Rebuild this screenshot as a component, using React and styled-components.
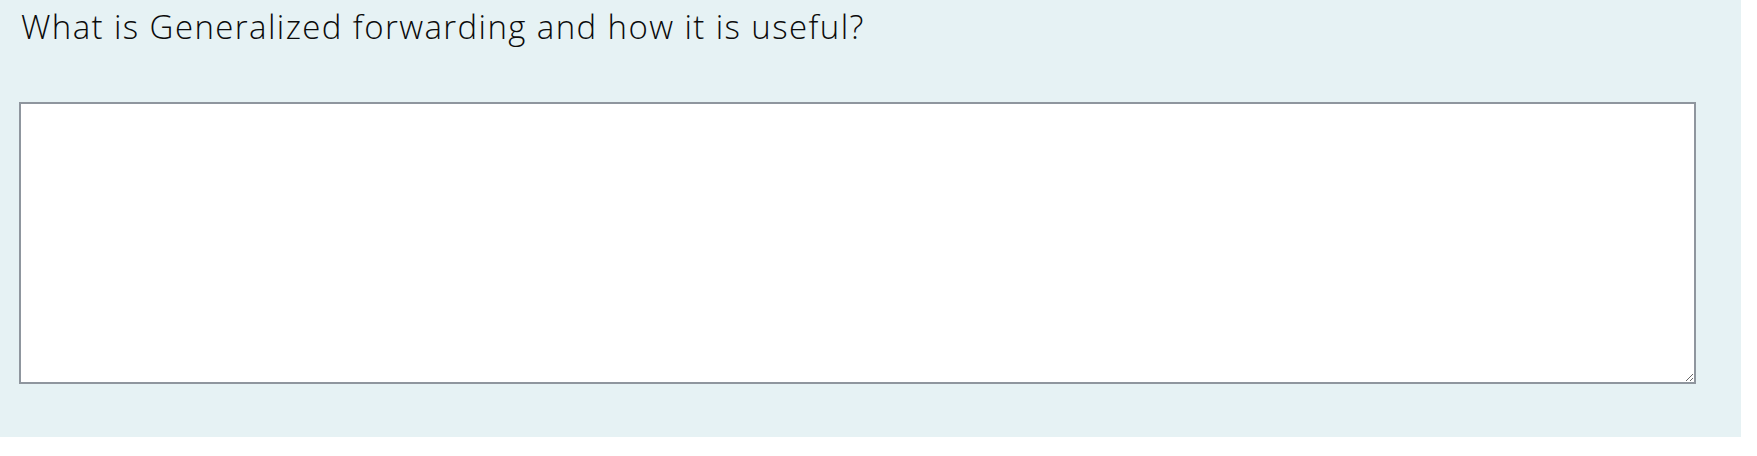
import React from "react";
import styled, { createGlobalStyle } from "styled-components";

const GlobalStyle = createGlobalStyle`
  body {
    margin: 0;
    background: #ffffff;
  }
`;

const Question = styled.div`
  box-sizing: border-box;
  width: 1741px;
  height: 437px;
  background: #e6f2f4;
  padding: 6px 0 0 19px;
`;

const Title = styled.h3`
  margin: 0;
  font-family: "Open Sans", sans-serif;
  font-weight: 300;
  font-size: 33px;
  line-height: 42px;
  letter-spacing: 1.4px;
  color: #0b0b0b;
  padding-left: 2px;
`;

const Answer = styled.textarea`
  display: block;
  box-sizing: border-box;
  width: 1677px;
  height: 282px;
  margin-top: 54px;
  border: 2px solid #8f969e;
  background: #ffffff;
  resize: both;
  outline: none;
`;

const App = () => {
  return (
    <>
      <GlobalStyle />
      <Question>
        <Title>What is Generalized forwarding and how it is useful?</Title>
        <Answer />
      </Question>
    </>
  );
};

export default App;
